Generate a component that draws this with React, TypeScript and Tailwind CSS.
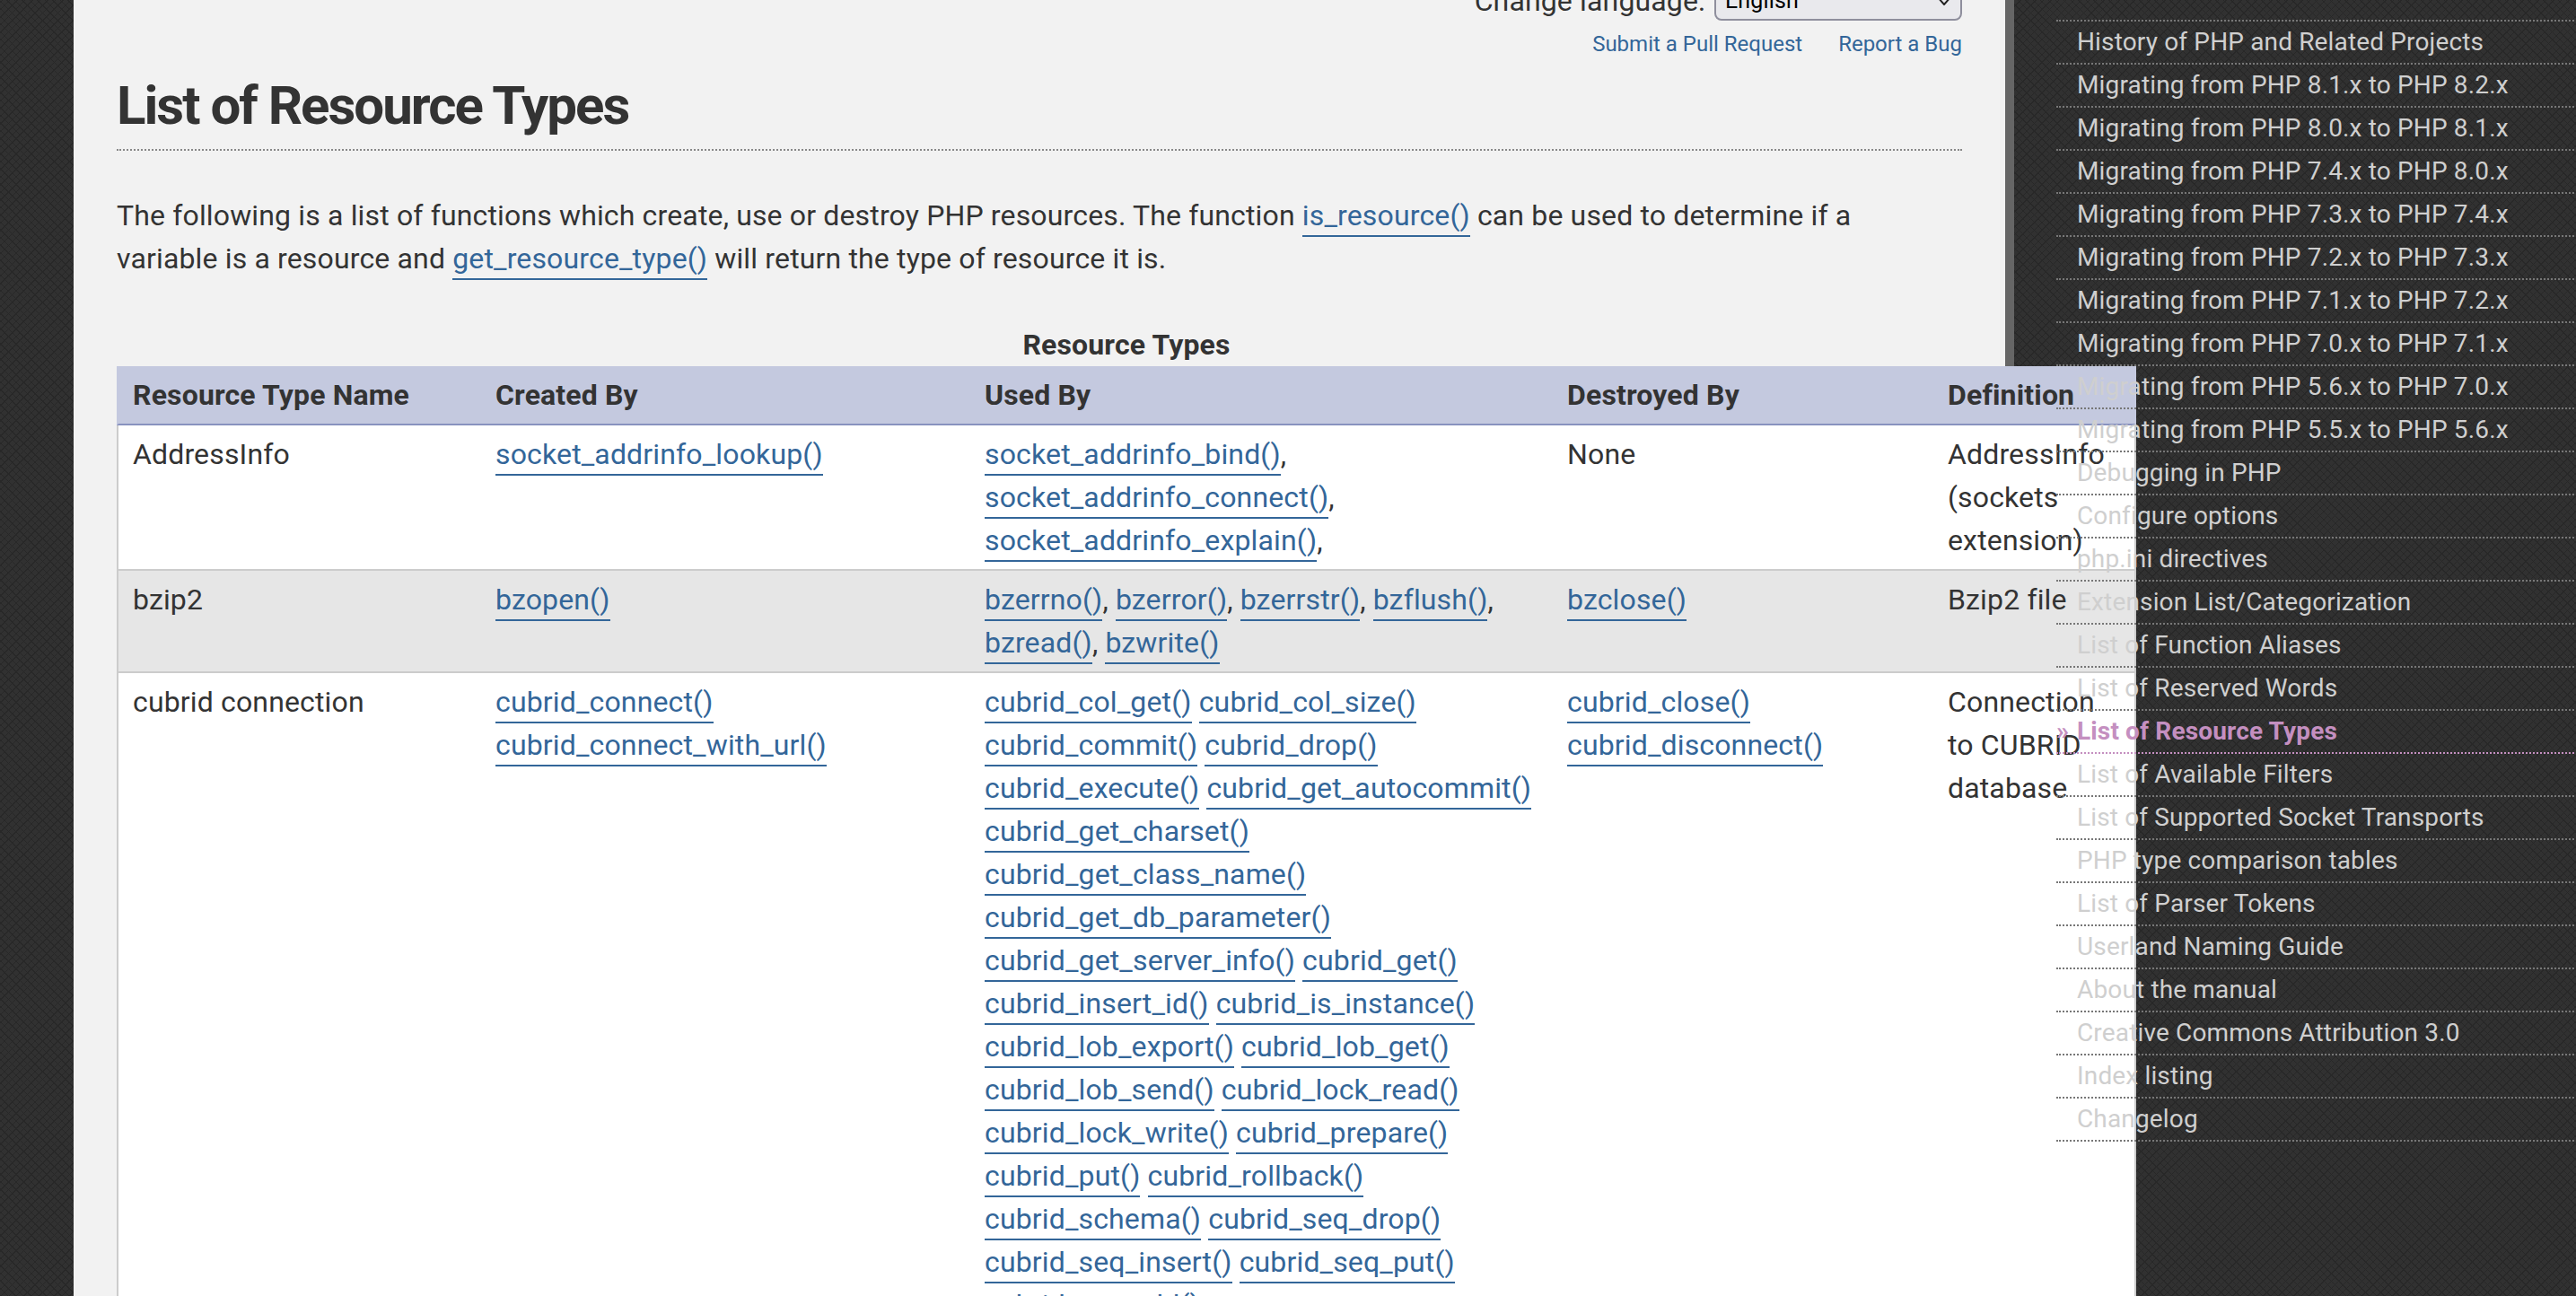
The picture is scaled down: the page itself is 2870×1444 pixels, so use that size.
import React from "react";

const LINK = "text-[#369] border-b-2 border-[#369] pb-[3px]";

type Item = { fn: string; after?: string };

const FnLine = ({ items }: { items: Item[] }) => (
  <div>
    {items.map((it, i) => (
      <React.Fragment key={i}>
        {i > 0 && " "}
        <a href="#" className={LINK}>
          {it.fn}
        </a>
        {it.after}
      </React.Fragment>
    ))}
  </div>
);

const lines = (rows: string[][], after?: string) =>
  rows.map((r, i) => <FnLine key={i} items={r.map((fn) => ({ fn, after }))} />);

const cubridUsed = [
  ["cubrid_col_get()", "cubrid_col_size()"],
  ["cubrid_commit()", "cubrid_drop()"],
  ["cubrid_execute()", "cubrid_get_autocommit()"],
  ["cubrid_get_charset()"],
  ["cubrid_get_class_name()"],
  ["cubrid_get_db_parameter()"],
  ["cubrid_get_server_info()", "cubrid_get()"],
  ["cubrid_insert_id()", "cubrid_is_instance()"],
  ["cubrid_lob_export()", "cubrid_lob_get()"],
  ["cubrid_lob_send()", "cubrid_lock_read()"],
  ["cubrid_lock_write()", "cubrid_prepare()"],
  ["cubrid_put()", "cubrid_rollback()"],
  ["cubrid_schema()", "cubrid_seq_drop()"],
  ["cubrid_seq_insert()", "cubrid_seq_put()"],
  ["cubrid_set_add()"],
  ["cubrid_set_autocommit()"],
];

const menu = [
  "History of PHP and Related Projects",
  "Migrating from PHP 8.1.x to PHP 8.2.x",
  "Migrating from PHP 8.0.x to PHP 8.1.x",
  "Migrating from PHP 7.4.x to PHP 8.0.x",
  "Migrating from PHP 7.3.x to PHP 7.4.x",
  "Migrating from PHP 7.2.x to PHP 7.3.x",
  "Migrating from PHP 7.1.x to PHP 7.2.x",
  "Migrating from PHP 7.0.x to PHP 7.1.x",
  "Migrating from PHP 5.6.x to PHP 7.0.x",
  "Migrating from PHP 5.5.x to PHP 5.6.x",
  "Debugging in PHP",
  "Configure options",
  "php.ini directives",
  "Extension List/Categorization",
  "List of Function Aliases",
  "List of Reserved Words",
  "List of Resource Types",
  "List of Available Filters",
  "List of Supported Socket Transports",
  "PHP type comparison tables",
  "List of Parser Tokens",
  "Userland Naming Guide",
  "About the manual",
  "Creative Commons Attribution 3.0",
  "Index listing",
  "Changelog",
];

const COLS = "grid grid-cols-[404px_545px_649px_424px_224px]";

const Row = ({ bg, cells }: { bg: string; cells: React.ReactNode[] }) => (
  <div className={`${COLS} ${bg} border-x-2 border-b-2 border-[#cccccc]`}>
    {cells.map((c, i) => (
      <div key={i} className="px-4 py-2">
        {c}
      </div>
    ))}
  </div>
);

export default function App() {
  return (
    <div className="flex h-[1444px] w-[2870px] overflow-hidden bg-[#313131] bg-[image:repeating-linear-gradient(45deg,#282828_0px,#282828_1px,transparent_1px,transparent_6px),repeating-linear-gradient(-45deg,#282828_0px,#282828_1px,transparent_1px,transparent_6px)] font-['Roboto',sans-serif] text-[32px] leading-[48px] tracking-[0.15px] text-[#333]">
      <div className="w-[82px] shrink-0" />

      {/* main column */}
      <div className="w-[2162px] shrink-0 bg-[#f2f2f2] border-r-[10px] border-[#666] px-12">
        <div className="h-[80px] flex flex-col items-end">
          <div className="-mt-[21px] flex h-[44px] items-center gap-[10px]">
            <span>Change language:</span>
            <div className="flex h-[44px] w-[276px] items-center justify-between rounded-[8px] border-2 border-[#8f8f9d] bg-[#e9e9ed] pl-[10px] pr-[10px] text-[25px] text-black">
              <span>English</span>
              <svg width="16" height="10" viewBox="0 0 16 10" fill="none">
                <path d="M1 1 L8 9 L15 1" stroke="#222" strokeWidth="2" />
              </svg>
            </div>
          </div>
          <div className="mt-[8px] flex gap-[40px] text-[24px] leading-[36px] tracking-normal text-[#369]">
            <a href="#">Submit a Pull Request</a>
            <a href="#">Report a Bug</a>
          </div>
        </div>

        <h1 className="text-[60px] font-bold leading-[75px] tracking-[-2px] pb-[11px] border-b-2 border-dotted border-[#888]">
          List of Resource Types
        </h1>

        <p className="mt-12">
          The following is a list of functions which create, use or destroy PHP resources. The function{" "}
          <a href="#" className={LINK}>is_resource()</a> can be used to determine if a
          <br />
          variable is a resource and <a href="#" className={LINK}>get_resource_type()</a> will return the type of
          resource it is.
        </p>

        <div className="mt-12 w-[2250px]">
          <div className="text-center font-bold">Resource Types</div>
          <div className={`${COLS} bg-[#c4c9df] border-x-2 border-x-transparent border-b-2 border-b-[#8892bf] font-bold`}>
            {["Resource Type Name", "Created By", "Used By", "Destroyed By", "Definition"].map((h) => (
              <div key={h} className="px-4 py-2">
                {h}
              </div>
            ))}
          </div>

          <Row
            bg="bg-white"
            cells={[
              "AddressInfo",
              lines([["socket_addrinfo_lookup()"]]),
              lines([["socket_addrinfo_bind()"], ["socket_addrinfo_connect()"], ["socket_addrinfo_explain()"]], ","),
              "None",
              <>
                <div>AddressInfo</div>
                <div>(sockets</div>
                <div>extension)</div>
              </>,
            ]}
          />
          <Row
            bg="bg-[#e6e6e6]"
            cells={[
              "bzip2",
              lines([["bzopen()"]]),
              <>
                <FnLine
                  items={[
                    { fn: "bzerrno()", after: "," },
                    { fn: "bzerror()", after: "," },
                    { fn: "bzerrstr()", after: "," },
                    { fn: "bzflush()", after: "," },
                  ]}
                />
                <FnLine items={[{ fn: "bzread()", after: "," }, { fn: "bzwrite()" }]} />
              </>,
              lines([["bzclose()"]]),
              "Bzip2 file",
            ]}
          />
          <Row
            bg="bg-white"
            cells={[
              "cubrid connection",
              lines([["cubrid_connect()"], ["cubrid_connect_with_url()"]]),
              lines(cubridUsed),
              lines([["cubrid_close()"], ["cubrid_disconnect()"]]),
              <>
                <div>Connection</div>
                <div>to CUBRID</div>
                <div>database</div>
              </>,
            ]}
          />
        </div>
      </div>

      {/* sidebar menu */}
      <div className="flex-1 pl-[47px] text-[28px] text-[#cfcfcf]">
        <div className="w-[700px]">
          <div className="h-[24px] border-b-2 border-dotted border-[#777]" />
          {menu.map((m) => {
            const active = m === "List of Resource Types";
            return (
              <div
                key={m}
                className={`flex h-[48px] items-center border-b-2 border-dotted ${
                  active ? "border-[#c48fc0] text-[#c48fc0] font-bold" : "border-[#777]"
                }`}
              >
                <span className="w-[23px] shrink-0">{active ? "»" : ""}</span>
                <a href="#">{m}</a>
              </div>
            );
          })}
        </div>
      </div>
    </div>
  );
}
